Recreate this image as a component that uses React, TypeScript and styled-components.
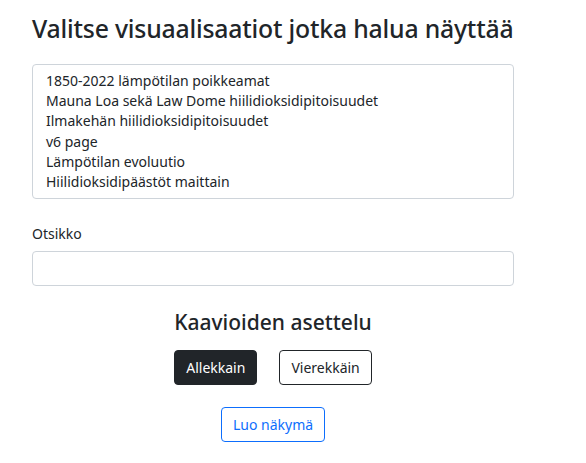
import React, { useState } from 'react'
import styled, { createGlobalStyle } from 'styled-components'

const GlobalStyle = createGlobalStyle`
  body {
    margin: 0;
    background: #fff;
    color: #212529;
    font-family: "Noto Sans", "Liberation Sans", sans-serif;
  }
`

const visualizations = [
  '1850-2022 lämpötilan poikkeamat',
  'Mauna Loa sekä Law Dome hiilidioksidipitoisuudet',
  'Ilmakehän hiilidioksidipitoisuudet',
  'v6 page',
  'Lämpötilan evoluutio',
  'Hiilidioksidipäästöt maittain',
]

const Page = styled.div`
  width: 482px;
  padding: 12px 0 0 32px;
  display: flex;
  flex-direction: column;
`

const Title = styled.h2`
  margin: 0 0 19px;
  font-size: 24.8px;
  font-weight: 500;
  line-height: 33px;
  letter-spacing: -0.2px;
  white-space: nowrap;
`

const ListBox = styled.div`
  height: 135px;
  box-sizing: border-box;
  border: 1px solid #ced4da;
  border-radius: 4px;
  padding: 6px 13px;
  display: flex;
  flex-direction: column;
  overflow: hidden;
`

const Option = styled.div<{ $selected?: boolean }>`
  font-size: 14px;
  line-height: 20.2px;
  white-space: nowrap;
  background: ${p => (p.$selected ? '#cfe2ff' : 'transparent')};
`

const Label = styled.label`
  margin-top: 25px;
  font-size: 14px;
  line-height: 20px;
`

const TextInput = styled.input`
  margin-top: 7px;
  height: 35px;
  box-sizing: border-box;
  border: 1px solid #ced4da;
  border-radius: 4px;
  padding: 6px 12px;
  font: inherit;
  font-size: 14px;
  outline: none;
`

const Center = styled.div`
  display: flex;
  flex-direction: column;
  align-items: center;
`

const SubTitle = styled.h4`
  margin: 23px 0 14px;
  font-size: 21px;
  font-weight: 500;
  line-height: 27px;
`

const ButtonRow = styled.div`
  display: flex;
  gap: 22px;
`

const Button = styled.button<{ $variant: 'dark' | 'outline-dark' | 'outline-primary' }>`
  height: 35px;
  padding: 0 11px;
  border-radius: 4px;
  font-family: inherit;
  font-size: 14px;
  cursor: pointer;
  border: 1px solid
    ${p => (p.$variant === 'outline-primary' ? '#0d6efd' : '#212529')};
  background: ${p => (p.$variant === 'dark' ? '#212529' : '#fff')};
  color: ${p =>
    p.$variant === 'dark' ? '#fff' : p.$variant === 'outline-primary' ? '#0d6efd' : '#212529'};
`

const CreateButton = styled(Button)`
  margin-top: 22px;
`

export default function App() {
  const [layout, setLayout] = useState<'col' | 'row'>('col')
  const [title, setTitle] = useState('')

  return (
    <Page>
      <GlobalStyle />
      <Title>Valitse visuaalisaatiot jotka halua näyttää</Title>
      <ListBox role="listbox">
        {visualizations.map(v => (
          <Option key={v}>{v}</Option>
        ))}
      </ListBox>
      <Label htmlFor="otsikko">Otsikko</Label>
      <TextInput id="otsikko" value={title} onChange={e => setTitle(e.target.value)} />
      <Center>
        <SubTitle>Kaavioiden asettelu</SubTitle>
        <ButtonRow>
          <Button $variant={layout === 'col' ? 'dark' : 'outline-dark'} onClick={() => setLayout('col')}>
            Allekkain
          </Button>
          <Button $variant={layout === 'row' ? 'dark' : 'outline-dark'} onClick={() => setLayout('row')}>
            Vierekkäin
          </Button>
        </ButtonRow>
        <CreateButton $variant="outline-primary">Luo näkymä</CreateButton>
      </Center>
    </Page>
  )
}
